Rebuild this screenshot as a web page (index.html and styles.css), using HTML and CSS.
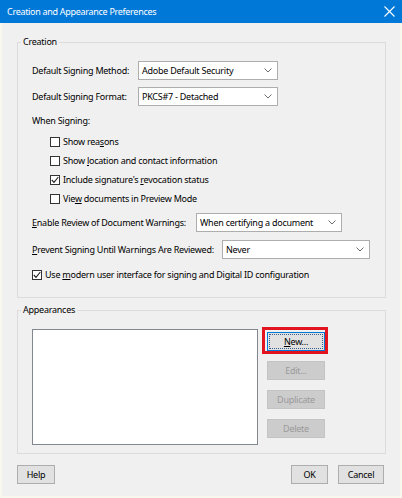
FILE: index.html
```html
<!DOCTYPE html>
<html lang="en">

<head>
    <meta charset="UTF-8">
    <meta name="viewport" content="width=device-width, initial-scale=1.0">
    <link rel="stylesheet" href="styles.css">
</head>

<body>
    <div class="window">
        <div class="titlebar">
            <span class="title">Creation and Appearance Preferences</span>
            <svg class="close" width="11" height="11" viewBox="0 0 11 11">
                <path d="M0.5 0.5 L10.5 10.5 M10.5 0.5 L0.5 10.5" stroke="#fff" stroke-width="1.1" fill="none" />
            </svg>
        </div>

        <div class="content">
            <fieldset class="group creation">
                <legend>Creation</legend>

                <div class="row sel-row first">
                    <span class="label lbl-method">Default Signing Method:</span>
                    <div class="combo combo-method">
                        <span>Adobe Default Security</span>
                        <svg class="chev" width="8" height="5" viewBox="0 0 8 5"><path d="M0.5 0.5 L4 4 L7.5 0.5" stroke="#6d6d6d" fill="none" /></svg>
                    </div>
                </div>

                <div class="row sel-row second">
                    <span class="label lbl-method">Default Signing Format:</span>
                    <div class="combo combo-method">
                        <span>PKCS#7 - Detached</span>
                        <svg class="chev" width="8" height="5" viewBox="0 0 8 5"><path d="M0.5 0.5 L4 4 L7.5 0.5" stroke="#6d6d6d" fill="none" /></svg>
                    </div>
                </div>

                <div class="row heading">When Signing:</div>

                <div class="row check indent">
                    <span class="box"></span>
                    <span>Show rea<u>s</u>ons</span>
                </div>
                <div class="row check indent">
                    <span class="box"></span>
                    <span>Show <u>l</u>ocation and contact information</span>
                </div>
                <div class="row check indent">
                    <span class="box checked">
                        <svg width="8" height="8" viewBox="0 0 8 8"><path d="M0.8 4 L3 6.3 L7.3 1" stroke="#222" stroke-width="1.1" fill="none" /></svg>
                    </span>
                    <span>Include signature's <u>r</u>evocation status</span>
                </div>
                <div class="row check indent">
                    <span class="box"></span>
                    <span>Vie<u>w</u> documents in Preview Mode</span>
                </div>

                <div class="row sel-row review">
                    <span class="label lbl-review"><u>E</u>nable Review of Document Warnings:</span>
                    <div class="combo combo-review">
                        <span>When certifying a document</span>
                        <svg class="chev" width="8" height="5" viewBox="0 0 8 5"><path d="M0.5 0.5 L4 4 L7.5 0.5" stroke="#6d6d6d" fill="none" /></svg>
                    </div>
                </div>

                <div class="row sel-row prevent">
                    <span class="label lbl-prevent"><u>P</u>revent Signing Until Warnings Are Reviewed:</span>
                    <div class="combo combo-prevent">
                        <span>Never</span>
                        <svg class="chev" width="8" height="5" viewBox="0 0 8 5"><path d="M0.5 0.5 L4 4 L7.5 0.5" stroke="#6d6d6d" fill="none" /></svg>
                    </div>
                </div>

                <div class="row check modern">
                    <span class="box checked">
                        <svg width="8" height="8" viewBox="0 0 8 8"><path d="M0.8 4 L3 6.3 L7.3 1" stroke="#222" stroke-width="1.1" fill="none" /></svg>
                    </span>
                    <span>Use <u>m</u>odern user interface for signing and Digital ID configuration</span>
                </div>
            </fieldset>

            <fieldset class="group appearances">
                <legend>Appearances</legend>
                <div class="app-row">
                    <div class="listbox"></div>
                    <div class="app-buttons">
                        <div class="highlight">
                            <button class="btn focused"><u>N</u>ew...</button>
                        </div>
                        <button class="btn" disabled>Edit...</button>
                        <button class="btn" disabled>Duplicate</button>
                        <button class="btn" disabled>Delete</button>
                    </div>
                </div>
            </fieldset>

            <div class="footer">
                <button class="btn btn-help">Help</button>
                <div class="footer-right">
                    <button class="btn btn-ok">OK</button>
                    <button class="btn btn-cancel">Cancel</button>
                </div>
            </div>
        </div>
    </div>
</body>

</html>
```

FILE: styles.css
```css
* {
    box-sizing: border-box;
}

body {
    margin: 0;
    background: #f0f0f0;
    font-family: "Noto Sans", "Open Sans", sans-serif;
    font-size: 9px;
    letter-spacing: -0.25px;
    line-height: 16px;
    color: #000;
}

.window {
    width: 402px;
    height: 498px;
    display: flex;
    flex-direction: column;
}

.titlebar {
    height: 23px;
    background: #0078d7;
    color: #fff;
    display: flex;
    align-items: center;
    justify-content: space-between;
    padding: 0 7px 0 7px;
    font-size: 9px;
    letter-spacing: -0.3px;
}

.content {
    flex: 1;
    background: #f0f0f0;
    border-left: 2px solid #f9f8ef;
    border-right: 2px solid #f9f8ef;
    border-bottom: 2px solid #f9f8ef;
    padding: 11px 14px 0 15px;
}

.group {
    margin: 0;
    padding: 0;
    border: 1px solid #dcdcdc;
    min-width: 0;
}

.group legend {
    margin-left: 3px;
    padding: 0 2px;
    line-height: 16px;
}

.creation {
    padding: 11px 0 13px 0;
}

.row {
    display: flex;
    align-items: center;
    padding-left: 14px;
    white-space: nowrap;
}

.sel-row {
    height: 19px;
}

.second {
    margin-top: 7px;
}

.heading {
    height: 18px;
    margin-top: 6px;
    margin-bottom: 2px;
}

.check {
    height: 19px;
}

.indent {
    padding-left: 32px;
}

.review {
    margin-top: 5px;
}

.prevent {
    margin-top: 8px;
}

.modern {
    margin-top: 6px;
}

.box {
    width: 10px;
    height: 10px;
    border: 1px solid #333;
    background: #fff;
    margin-right: 3px;
    display: flex;
    align-items: center;
    justify-content: center;
    flex: none;
}

.label {
    flex: none;
}

.lbl-method {
    width: 106px;
}

.lbl-review {
    width: 164px;
}

.lbl-prevent {
    width: 190px;
}

.combo {
    height: 19px;
    background: #fff;
    border: 1px solid #adadad;
    display: flex;
    align-items: center;
    justify-content: space-between;
    padding: 0 5px 0 3px;
}

.combo-method {
    width: 140px;
}

.combo-review {
    width: 146px;
}

.combo-prevent {
    width: 148px;
}

.appearances {
    margin-top: 4px;
    padding: 11px 0 8px 0;
}

.app-row {
    display: flex;
    align-items: flex-start;
    padding-left: 14px;
}

.listbox {
    width: 226px;
    height: 116px;
    background: #fff;
    border: 1px solid #828790;
}

.app-buttons {
    margin-left: 9px;
    margin-top: 3px;
    display: flex;
    flex-direction: column;
    gap: 10px;
}

.highlight {
    position: relative;
}

.highlight::after {
    content: "";
    position: absolute;
    left: -5px;
    top: -5px;
    right: -3px;
    bottom: -3px;
    border: 3px solid #e2141f;
}

.btn {
    font-family: inherit;
    font-size: 9px;
    letter-spacing: -0.25px;
    line-height: 16px;
    color: #000;
    height: 19px;
    padding: 0;
    background: #e1e1e1;
    border: 1px solid #adadad;
    display: block;
}

.app-buttons .btn {
    width: 58px;
}

.btn:disabled {
    background: #cccccc;
    border-color: #c4c4c4;
    color: #9a9a9a;
}

.btn.focused {
    border-color: #0078d7;
    outline: 1px dotted #3b5f8c;
    outline-offset: -3px;
}

.footer {
    margin-top: 11px;
    display: flex;
    justify-content: space-between;
    padding-right: 2px;
}

.footer-right {
    display: flex;
    gap: 10px;
}

.btn-help {
    width: 38px;
}

.btn-ok {
    width: 37px;
}

.btn-cancel {
    width: 46px;
}
```
